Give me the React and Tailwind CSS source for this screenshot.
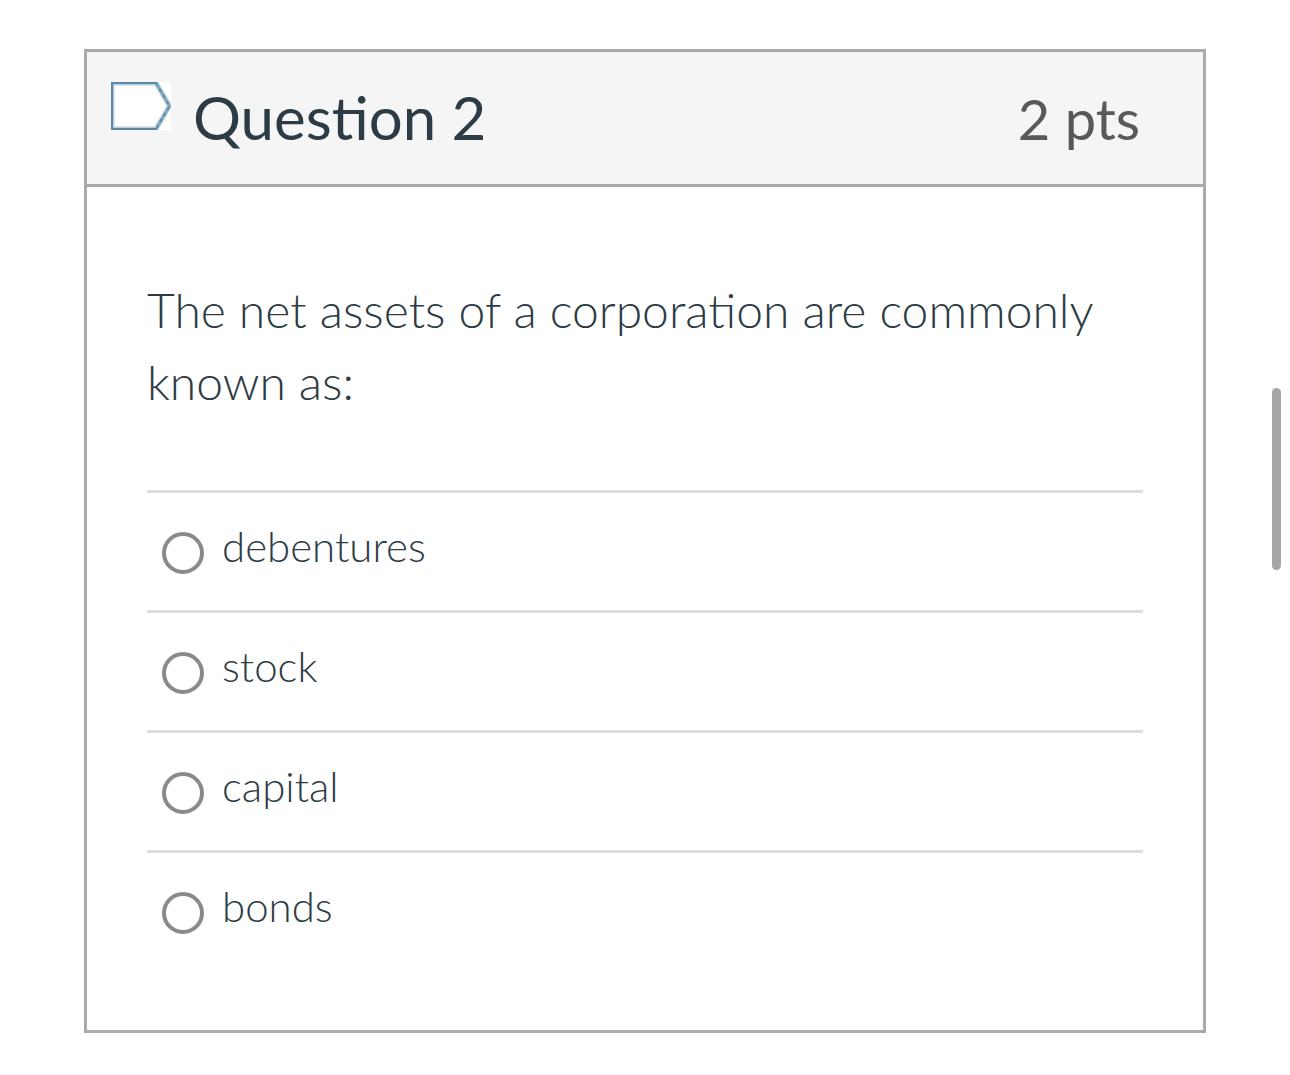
import React, { useState } from 'react';

const answers = ['debentures', 'stock', 'capital', 'bonds'];

const FlagIcon = () => (
  <svg width="60" height="48" viewBox="0 0 60 48" fill="none" aria-hidden="true">
    <rect width="60" height="48" fill="#fff" />
    <path d="M45 1L58.5 24L45 47" stroke="#c3d5e0" strokeWidth="5" />
    <path d="M45 1L58.5 24L45 47" stroke="#84a8bd" strokeWidth="3" />
    <path d="M45 1L58.5 24L45 47" stroke="#5f8ca8" strokeWidth="2" strokeDasharray="3 4" />
    <path d="M45 2.5H2.5V45.5H45" stroke="#b9cedb" strokeWidth="2" />
    <path d="M46 1H1V47H46" stroke="#5b87a2" strokeWidth="2" />
  </svg>
);

const App = () => {
  const [selected, setSelected] = useState('');

  return (
    <div className="relative min-h-screen bg-white px-[84px] pt-[49px] pb-[42px] font-['Lato',sans-serif] text-[#2d3b45]">
      <main className="border-3 border-[#aaaaaa]">
        <header className="flex items-start border-b-3 border-[#aaaaaa] bg-[#f5f5f5] pt-[30px] pr-[63px] pb-7 pl-6">
          <button type="button" aria-label="Flag question">
            <FlagIcon />
          </button>
          <h1 className="ml-[22px] flex-1 text-[60px] leading-[70px]">Question 2</h1>
          <span className="text-[56px] leading-[74px] text-[#595959]">2 pts</span>
        </header>

        <div className="p-[60px] pt-[87px]">
          <p id="question-text" className="text-[48px] leading-[72px] font-light">
            The net assets of a corporation are commonly known as:
          </p>

          <fieldset aria-labelledby="question-text" className="mt-[72px]">
            {answers.map((answer) => (
              <label key={answer} className="flex h-[120px] items-start border-t-3 border-[#dddddd] pl-[15px]">
                <input
                  type="radio"
                  name="question-2"
                  value={answer}
                  checked={selected === answer}
                  onChange={() => setSelected(answer)}
                  className="mt-[39px] size-[42px] appearance-none rounded-full border-4 border-[#8a8a8e] bg-white checked:border-[12px] checked:border-[#0374b5]"
                />
                <span className="mt-[25px] ml-[18px] text-[42px] leading-[56px] font-light">{answer}</span>
              </label>
            ))}
          </fieldset>
        </div>
      </main>

      {/* Overlay scroll thumb */}
      <div className="absolute top-[388px] right-[9px] h-[182px] w-[9px] rounded-full bg-[#a6a6a6]" />
    </div>
  );
};

export default App;
